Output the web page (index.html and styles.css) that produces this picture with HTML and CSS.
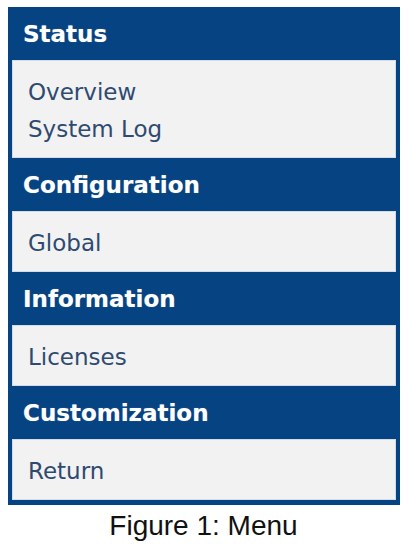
FILE: index.html
```html
<!DOCTYPE html>
<html>
<head>
<meta charset="utf-8">
<link rel="stylesheet" href="styles.css">
</head>
<body>
<nav class="menu">
  <div class="menu-head">Status</div>
  <ul class="menu-panel">
    <li>Overview</li>
    <li>System Log</li>
  </ul>
  <div class="menu-head">Configuration</div>
  <ul class="menu-panel">
    <li>Global</li>
  </ul>
  <div class="menu-head">Information</div>
  <ul class="menu-panel">
    <li>Licenses</li>
  </ul>
  <div class="menu-head">Customization</div>
  <ul class="menu-panel">
    <li>Return</li>
  </ul>
</nav>
<p class="caption">Figure 1: Menu</p>
</body>
</html>
```

FILE: styles.css
```css
html, body {
  margin: 0;
  padding: 0;
  background: #ffffff;
}
body {
  padding: 7px 0 0 8px;
}
.menu {
  width: 384px;
  background: #064382;
  padding: 0 4px 5px 4px;
  font-family: "DejaVu Sans", Verdana, sans-serif;
}
.menu-head {
  height: 53px;
  display: flex;
  align-items: center;
  padding-left: 11px;
  color: #ffffff;
  font-weight: bold;
  font-size: 23px;
  text-shadow: 0 0 1px rgba(255,255,255,0.4);
}
.menu-panel {
  list-style: none;
  margin: 0;
  padding: 14px 0 10px 16px;
  background: #f2f2f2;
  box-shadow: inset 0 0 0 1px #d3dbe8;
  color: #2f4a70;
  font-size: 23px;
  line-height: 37px;
}
.menu-panel li {
  margin: 0;
  padding: 0;
}
.caption {
  margin: 4px 0 0 -8px;
  text-align: center;
  font-family: "Liberation Sans", Arial, sans-serif;
  font-size: 28px;
  line-height: 34px;
  color: #111111;
}
```
